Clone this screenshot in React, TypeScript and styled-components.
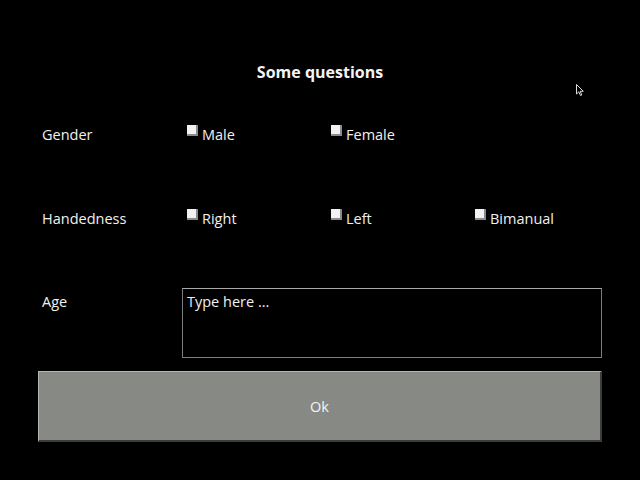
import styled, {createGlobalStyle} from 'styled-components';

const GlobalStyle = createGlobalStyle`
  html, body {
    margin: 0;
    padding: 0;
    background: #000;
  }
  body {
    width: 640px;
    height: 480px;
    overflow: hidden;
    font-family: "Open Sans", "DejaVu Sans", sans-serif;
    color: #f0f0f0;
  }
`;

const Screen = styled.div`
  position: relative;
  width: 640px;
  height: 480px;
  padding: 62px 38px 0 38px;
  box-sizing: border-box;
`;

const Title = styled.h1`
  margin: 0;
  font-size: 16px;
  line-height: 20px;
  font-weight: 700;
  text-align: center;
  color: #f4f4f4;
`;

const Form = styled.div`
  margin-top: 42px;
  display: flex;
  flex-direction: column;
`;

const Row = styled.div<{$height: number}>`
  display: grid;
  grid-template-columns: 144px 1fr;
  align-items: start;
  height: ${p => p.$height}px;
`;

const Label = styled.div<{$offset?: number}>`
  padding-left: 4px;
  padding-top: ${p => p.$offset ?? 0}px;
  font-size: 14.5px;
  line-height: 22px;
`;

const Options = styled.div`
  display: grid;
  grid-template-columns: repeat(3, 144px);
`;

const Option = styled.label`
  display: flex;
  align-items: flex-start;
  gap: 4px;
  padding-left: 5px;
  font-size: 14.5px;
  line-height: 22px;
`;

const Box = styled.span`
  width: 9px;
  height: 9px;
  margin-top: 1px;
  background: #f2f2f2;
  border-right: 2px solid #8a8a8a;
  border-bottom: 2px solid #8a8a8a;
  box-sizing: content-box;
  flex-shrink: 0;
`;

const TextBox = styled.div`
  height: 64px;
  border: 1px solid #7d7d7d;
  border-top-color: #a8a8a8;
  padding: 2px 4px;
  font-size: 14.5px;
  line-height: 22px;
  color: #f0f0f0;
  box-sizing: content-box;
  overflow: hidden;
`;

const OkButton = styled.button`
  display: block;
  width: 564px;
  height: 71px;
  margin-top: 13px;
  background: #878a84;
  border-top: 1px solid #b4b6b2;
  border-left: 1px solid #b4b6b2;
  border-right: 2px solid #3c3d3b;
  border-bottom: 2px solid #3c3d3b;
  color: #f4f4f4;
  font-family: "Open Sans", "DejaVu Sans", sans-serif;
  font-size: 14.5px;
  padding: 0;
`;

const Cursor = styled.svg`
  position: absolute;
  left: 576px;
  top: 84px;
`;

const genders = ['Male', 'Female'];
const hands = ['Right', 'Left', 'Bimanual'];

export default function App() {
  return (
    <>
      <GlobalStyle />
      <Screen>
        <Title>Some questions</Title>
        <Form>
          <Row $height={84}>
            <Label>Gender</Label>
            <Options>
              {genders.map(g => (
                <Option key={g}>
                  <Box />
                  {g}
                </Option>
              ))}
            </Options>
          </Row>
          <Row $height={80}>
            <Label>Handedness</Label>
            <Options>
              {hands.map(h => (
                <Option key={h}>
                  <Box />
                  {h}
                </Option>
              ))}
            </Options>
          </Row>
          <Row $height={70}>
            <Label $offset={3}>Age</Label>
            <TextBox>Type here ...</TextBox>
          </Row>
        </Form>
        <OkButton>Ok</OkButton>
        <Cursor width="8" height="13" viewBox="0 0 8 13">
          <path d="M0.5 0.5 L0.5 10 L2.8 7.8 L4.5 11.5 L5.8 11 L4.2 7.3 L7.3 7.3 Z" fill="#000" stroke="#ddd" strokeWidth="1" />
        </Cursor>
      </Screen>
    </>
  );
}
